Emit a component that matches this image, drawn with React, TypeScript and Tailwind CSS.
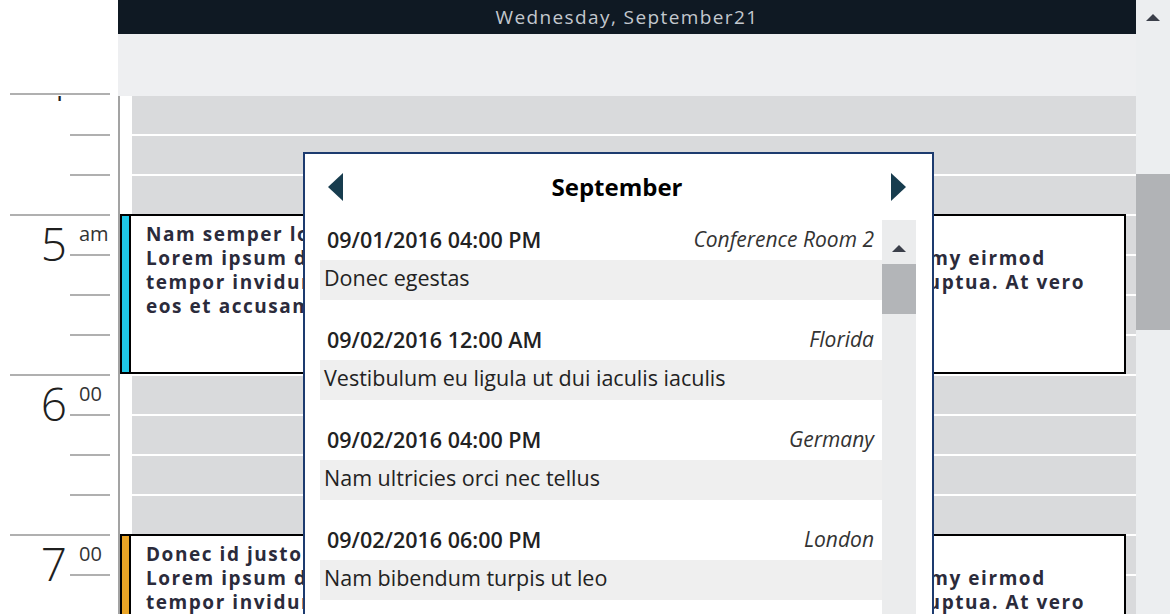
import React from "react";

const hours = [
  { h: "4", sup: "00" },
  { h: "5", sup: "am" },
  { h: "6", sup: "00" },
  { h: "7", sup: "00" },
];

const bodyLines = [
  "Lorem ipsum dolor sit amet, consetetur sadipscing elitr, sed diam nonumy eirmod",
  "tempor invidunt ut labore et dolore magna aliquyam erat, sed diam voluptua. At vero",
  "eos et accusam et justo duo dolores et ea rebum.",
];

const events: Record<string, { title: string; color: string }> = {
  "5": { title: "Nam semper lorem", color: "bg-[#1fc7e7]" },
  "7": { title: "Donec id justo", color: "bg-[#e9a426]" },
};

const agenda = [
  { date: "09/01/2016 04:00 PM", place: "Conference Room 2", text: "Donec egestas" },
  { date: "09/02/2016 12:00 AM", place: "Florida", text: "Vestibulum eu ligula ut dui iaculis iaculis" },
  { date: "09/02/2016 04:00 PM", place: "Germany", text: "Nam ultricies orci nec tellus" },
  { date: "09/02/2016 06:00 PM", place: "London", text: "Nam bibendum turpis ut leo" },
  { date: "09/03/2016 09:00 AM", place: "Paris", text: "Aliquam erat volutpat" },
];

const UpArrow = ({ className }: { className?: string }) => (
  <svg width="14" height="7" viewBox="0 0 14 7" className={className}>
    <path d="M0 7 L7 0 L14 7 Z" fill="#3b3f4a" />
  </svg>
);

const HourGutter = ({ h, sup }: { h: string; sup: string }) => (
  <div className="flex h-[160px] flex-col">
    <div className="h-[40px]">
      <div className="ml-[10px] h-[2px] w-[100px] bg-[#b0b0b0]" />
      <div className="flex items-start">
        <div className="mt-[4px] w-[67px] text-right text-[46px] leading-none font-light text-[#1f1f1f]">{h}</div>
        <div className="mt-[8px] ml-[12px] text-[20px] leading-none text-[#333]">{sup}</div>
      </div>
    </div>
    {[1, 2, 3].map((i) => (
      <div key={i} className="h-[40px]">
        <div className="ml-[70px] h-[2px] w-[40px] bg-[#b0b0b0]" />
      </div>
    ))}
  </div>
);

const HourSlots = ({ h }: { h: string }) => {
  const ev = events[h];
  return (
    <div className="relative h-[160px]">
      <div className="flex h-full flex-col pl-[12px]">
        {[0, 1, 2, 3].map((i) => (
          <div key={i} className="h-[40px] border-t-2 border-white bg-[#d9dadc]" />
        ))}
      </div>
      {ev && (
        <div className="absolute top-0 right-[10px] left-0 flex h-[160px] border-2 border-black bg-white">
          <div className={`w-[9px] border-r-2 border-black ${ev.color}`} />
          <div className="pt-[6px] pl-[15px] text-[19px] leading-[24px] font-bold tracking-[1.55px] whitespace-nowrap text-[#2b2b3b]">
            <div>{ev.title}</div>
            {bodyLines.map((l) => (
              <div key={l}>{l}</div>
            ))}
          </div>
        </div>
      )}
    </div>
  );
};

const AgendaPopup = () => (
  <div className="absolute top-[152px] left-[303px] h-[480px] w-[631px] border-2 border-[#1d3b6f] bg-white">
    <div className="flex h-[66px] items-center justify-between pr-[26px] pl-[23px]">
      <svg width="15" height="28" viewBox="0 0 15 28">
        <path d="M15 0 L0 14 L15 28 Z" fill="#173c4e" />
      </svg>
      <span className="text-[24px] font-bold text-black">September</span>
      <svg width="15" height="28" viewBox="0 0 15 28">
        <path d="M0 0 L15 14 L0 28 Z" fill="#173c4e" />
      </svg>
    </div>
    <div className="flex pl-[15px]">
      <div className="flex w-[562px] flex-col">
        {agenda.map((a) => (
          <div key={a.date} className="mb-[20px]">
            <div className="flex h-[40px] items-center justify-between pr-[8px] pl-[7px]">
              <span className="text-[21.5px] font-semibold text-[#222]">{a.date}</span>
              <span className="text-[21px] text-[#333] italic">{a.place}</span>
            </div>
            <div className="flex h-[40px] items-center bg-[#efefef] pb-[3px] pl-[4px] text-[21.5px] text-[#222]">{a.text}</div>
          </div>
        ))}
      </div>
      <div className="flex w-[34px] flex-col bg-[#ebeced]">
        <div className="flex h-[44px] items-end justify-center pb-[12px]">
          <UpArrow />
        </div>
        <div className="h-[50px] bg-[#b3b5b8]" />
      </div>
    </div>
  </div>
);

export default function App() {
  return (
    <div className="flex h-[614px] w-[1170px] overflow-hidden bg-white font-['Open_Sans','Noto_Sans',sans-serif]">
      <div className="relative flex flex-1 flex-col">
        <div className="flex h-[96px] shrink-0">
          <div className="flex w-[118px] flex-col justify-end">
            <div className="mb-[1px] ml-[10px] h-[2px] w-[100px] bg-[#b0b0b0]" />
          </div>
          <div className="flex flex-1 flex-col">
            <div className="flex h-[34px] items-center justify-center bg-[#0f1923] text-[19px] tracking-[1.4px] text-[#c3c8ce]">
              Wednesday, September21
            </div>
            <div className="flex-1 bg-[#eeeff1]" />
          </div>
        </div>
        <div className="flex-1 overflow-hidden">
          <div className="-mt-[42px] flex">
            <div className="w-[118px]">
              {hours.map((x) => (
                <HourGutter key={x.h} h={x.h} sup={x.sup} />
              ))}
            </div>
            <div className="mt-[42px] w-[2px] bg-[#a3a3a3]" />
            <div className="flex-1">
              {hours.map((x) => (
                <HourSlots key={x.h} h={x.h} />
              ))}
            </div>
          </div>
        </div>
        <AgendaPopup />
      </div>
      <div className="flex w-[34px] flex-col bg-[#eceef0]">
        <div className="flex h-[34px] items-center justify-center">
          <UpArrow />
        </div>
        <div className="h-[140px]" />
        <div className="h-[156px] bg-[#b1b3b6]" />
      </div>
    </div>
  );
}
